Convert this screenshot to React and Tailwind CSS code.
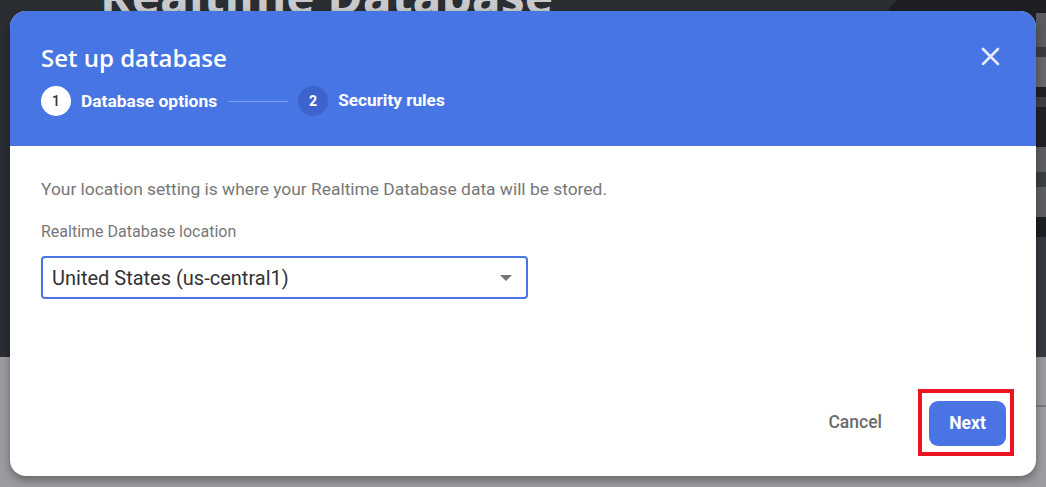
import React from "react";

export default function App() {
  return (
    <div className="relative w-[1046px] h-[487px] overflow-hidden" style={{ fontFamily: "Roboto, 'Liberation Sans', sans-serif" }}>
      {/* page behind */}
      <div className="flex flex-col w-full h-full">
        <div className="h-[357px] bg-[#2a2e33] relative">
          <div className="absolute left-[100px] top-[-40px] text-[48px] font-bold text-[#c9cacc] whitespace-nowrap" style={{ fontFamily: "'Open Sans', sans-serif" }}>Realtime Database</div>
          <div className="absolute right-[-60px] top-[-40px] w-[240px] h-[240px] rounded-full bg-[#1d1f23]" />
        </div>
        <div className="flex-1 bg-[#9c9ca0]" />
      </div>
      <div className="absolute right-0 top-0 w-[10px] h-[487px] flex flex-col">
        <div className="h-[13px] bg-[#1c1e22]" />
        <div className="h-[34px] bg-[#5a5c60]" />
        <div className="h-[10px] bg-[#3a3c40]" />
        <div className="h-[30px] bg-[#67686c]" />
        <div className="h-[10px] bg-[#1f2125]" />
        <div className="h-[10px] bg-[#3e4044]" />
        <div className="h-[40px] bg-[#1f2125]" />
        <div className="h-[25px] bg-[#5c5e62]" />
        <div className="h-[15px] bg-[#3a3d42]" />
        <div className="h-[30px] bg-[#5d5f63]" />
        <div className="h-[20px] bg-[#1c1f24]" />
        <div className="h-[120px] bg-[#353a40]" />
        <div className="h-[48px] bg-[#999a9e]" />
        <div className="h-[2px] bg-[#7a7b7e]" />
        <div className="flex-1 bg-[#9c9ca0]" />
      </div>

      {/* dialog */}
      <div className="absolute left-[10px] top-[11px] w-[1026px] h-[465px] bg-white rounded-[16px] overflow-hidden flex flex-col shadow-[0_4px_8px_rgba(0,0,0,0.35)]">
        <div className="h-[135px] bg-[#4875e4] pl-[31px] pr-[34px] pt-[32px] relative">
          <div className="text-white text-[24px] leading-[30px]" style={{ fontFamily: "'Open Sans', Roboto, sans-serif", fontWeight: 600 }}>Set up database</div>
          <div className="flex items-center mt-[13px]">
            <div className="w-[30px] h-[30px] rounded-full bg-white flex items-center justify-center text-[#333] text-[14px] font-medium">1</div>
            <div className="ml-[10px] text-white text-[17.4px] font-bold">Database options</div>
            <div className="ml-[11px] w-[60px] h-px bg-[#7f9ef0]" />
            <div className="ml-[10px] w-[30px] h-[30px] rounded-full bg-[#3d64cc] flex items-center justify-center text-white text-[14px] font-bold">2</div>
            <div className="ml-[10px] text-white text-[17.2px] font-bold">Security rules</div>
          </div>
          <svg className="absolute left-[971px] top-[36px]" width="19" height="19" viewBox="0 0 19 19">
            <path d="M2 2 L17 17 M17 2 L2 17" stroke="#e6ecfb" strokeWidth="2.6" strokeLinecap="round" />
          </svg>
        </div>
        <div className="flex-1 flex flex-col pl-[31px] pr-[30px]">
          <div className="mt-[31px] text-[17.4px] text-[#777] leading-[24px]">Your location setting is where your Realtime Database data will be stored.</div>
          <div className="mt-[21px] text-[16px] text-[#777] leading-[20px]">Realtime Database location</div>
          <div className="mt-[14px] w-[487px] h-[43px] border-2 border-[#4a74e4] rounded-[4px] flex items-center justify-between pl-[9px] pr-[14px]">
            <span className="text-[20px] text-[#333]">United States (us-central1)</span>
            <svg width="12" height="6" viewBox="0 0 12 6"><path d="M0 0 L12 0 L6 6 Z" fill="#757575" /></svg>
          </div>
          <div className="flex-1" />
          <div className="flex items-center justify-end mb-[20px]">
            <span className="text-[17.5px] font-medium text-[#6b6b6b] mr-[36px]">Cancel</span>
            <div className="border-[4px] border-[#ea1520] pl-[7px] pr-[4px] pt-[8px] pb-[6px] mr-[-8px]">
              <div className="w-[77px] h-[45px] rounded-[9px] bg-[#4a74e4] flex items-center justify-center text-white text-[17.5px] font-bold">Next</div>
            </div>
          </div>
        </div>
      </div>
    </div>
  );
}
